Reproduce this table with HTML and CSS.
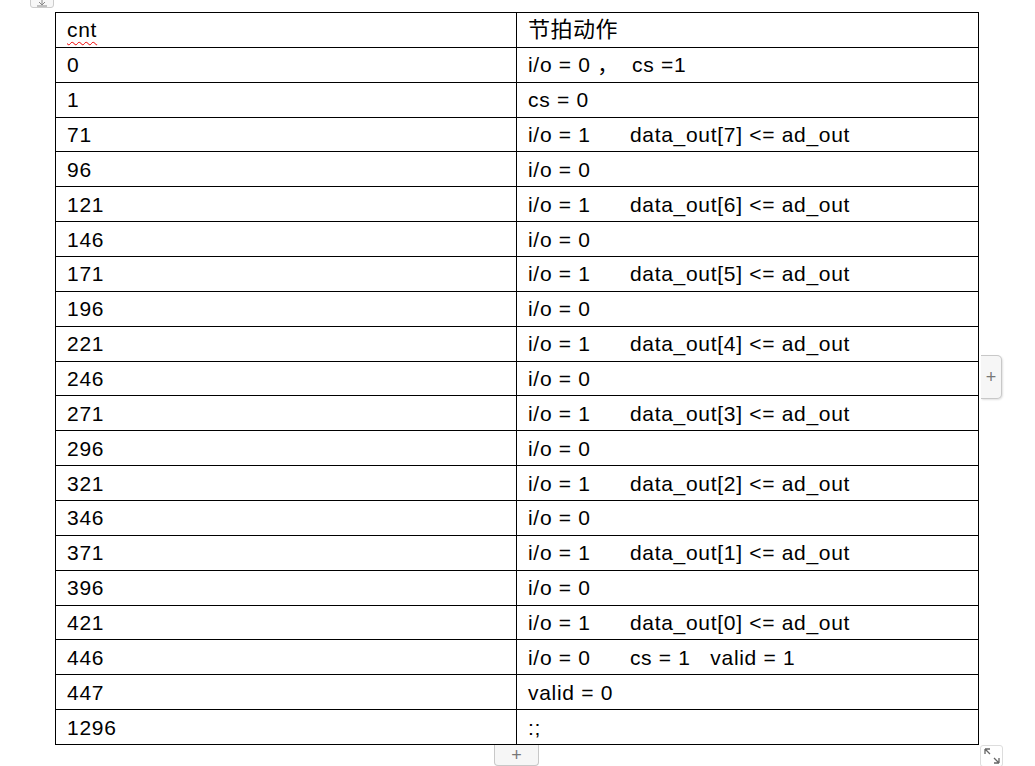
FILE: index.html
```html
<!DOCTYPE html>
<html>
<head>
<meta charset="utf-8">
<link rel="stylesheet" href="styles.css">
</head>
<body>
<div class="page">
  <div class="move-handle">
    <svg width="14" height="10" viewBox="0 0 14 10"><path d="M7 0v8M4 5l3 3 3-3M2 9h10" fill="none" stroke="#888" stroke-width="1"/></svg>
  </div>
  <table class="grid">
    <colgroup><col class="c1"><col class="c2"></colgroup>
    <tr><td><span class="spell">cnt</span></td><td class="cjk">节拍动作</td></tr>
    <tr><td>0</td><td class="pre">i/o = 0 ，  cs =1</td></tr>
    <tr><td>1</td><td>cs = 0</td></tr>
    <tr><td>71</td><td class="pre">i/o = 1      data_out[7] &lt;= ad_out</td></tr>
    <tr><td>96</td><td>i/o = 0</td></tr>
    <tr><td>121</td><td class="pre">i/o = 1      data_out[6] &lt;= ad_out</td></tr>
    <tr><td>146</td><td>i/o = 0</td></tr>
    <tr><td>171</td><td class="pre">i/o = 1      data_out[5] &lt;= ad_out</td></tr>
    <tr><td>196</td><td>i/o = 0</td></tr>
    <tr><td>221</td><td class="pre">i/o = 1      data_out[4] &lt;= ad_out</td></tr>
    <tr><td>246</td><td>i/o = 0</td></tr>
    <tr><td>271</td><td class="pre">i/o = 1      data_out[3] &lt;= ad_out</td></tr>
    <tr><td>296</td><td>i/o = 0</td></tr>
    <tr><td>321</td><td class="pre">i/o = 1      data_out[2] &lt;= ad_out</td></tr>
    <tr><td>346</td><td>i/o = 0</td></tr>
    <tr><td>371</td><td class="pre">i/o = 1      data_out[1] &lt;= ad_out</td></tr>
    <tr><td>396</td><td>i/o = 0</td></tr>
    <tr><td>421</td><td class="pre">i/o = 1      data_out[0] &lt;= ad_out</td></tr>
    <tr><td>446</td><td class="pre">i/o = 0      cs = 1   valid = 1</td></tr>
    <tr><td>447</td><td>valid = 0</td></tr>
    <tr><td>1296</td><td>:;</td></tr>
  </table>
  <div class="add-col">+</div>
  <div class="add-row">+</div>
  <div class="resize">
    <svg width="20" height="20" viewBox="0 0 20 20"><path d="M3 3h5M3 3v5M3 3l5 5M17 17h-5M17 17v-5M17 17l-5-5" fill="none" stroke="#666" stroke-width="1.3"/></svg>
  </div>
</div>
</body>
</html>
```
FILE: styles.css
```css
html, body {
  margin: 0;
  padding: 0;
  background: #fff;
}
.page {
  position: relative;
  width: 1035px;
  height: 766px;
  overflow: hidden;
  padding-top: 12px;
  padding-left: 55px;
  box-sizing: border-box;
  font-family: "Liberation Sans", "Noto Sans CJK SC", sans-serif;
}
.grid {
  border-collapse: collapse;
  width: 923px;
  table-layout: fixed;
}
.c1 { width: 461px; }
.c2 { width: 462px; }
.grid td {
  border: 1px solid #000;
  height: 34.86px;
  padding: 0 0 0 11px;
  box-sizing: border-box;
  font-size: 21px;
  letter-spacing: 0.7px;
  color: #000;
  vertical-align: middle;
  line-height: 1;
}
.grid td.pre {
  white-space: pre;
}
.grid td.cjk {
  font-size: 22px;
  letter-spacing: 0.5px;
}
.spell {
  text-decoration: underline wavy #e00;
  text-decoration-thickness: 1px;
  text-underline-offset: 4px;
}
.move-handle {
  position: absolute;
  left: 30px;
  top: -10px;
  width: 22px;
  height: 16px;
  border: 1px solid #ccc;
  border-radius: 3px;
  background: #f7f7f7;
  display: flex;
  align-items: flex-end;
  justify-content: center;
}
.add-col {
  position: absolute;
  left: 981px;
  top: 355px;
  width: 21px;
  height: 44px;
  border: 1px solid #c8c8c8;
  border-left: none;
  border-radius: 0 5px 5px 0;
  background: #f6f6f6;
  box-sizing: border-box;
  color: #777;
  font-size: 18px;
  display: flex;
  align-items: center;
  justify-content: center;
  box-shadow: 1px 1px 2px rgba(0,0,0,0.12);
}
.add-row {
  position: absolute;
  left: 494px;
  top: 745px;
  width: 45px;
  height: 21px;
  border: 1px solid #c8c8c8;
  border-top: none;
  border-radius: 0 0 4px 4px;
  background: #f6f6f6;
  box-sizing: border-box;
  color: #777;
  font-size: 18px;
  display: flex;
  align-items: center;
  justify-content: center;
}
.resize {
  position: absolute;
  left: 980px;
  top: 745px;
  width: 23px;
  height: 22px;
  border: 1px solid #ddd;
  border-radius: 3px;
  background: #fff;
  box-sizing: border-box;
  display: flex;
  align-items: center;
  justify-content: center;
}
```
